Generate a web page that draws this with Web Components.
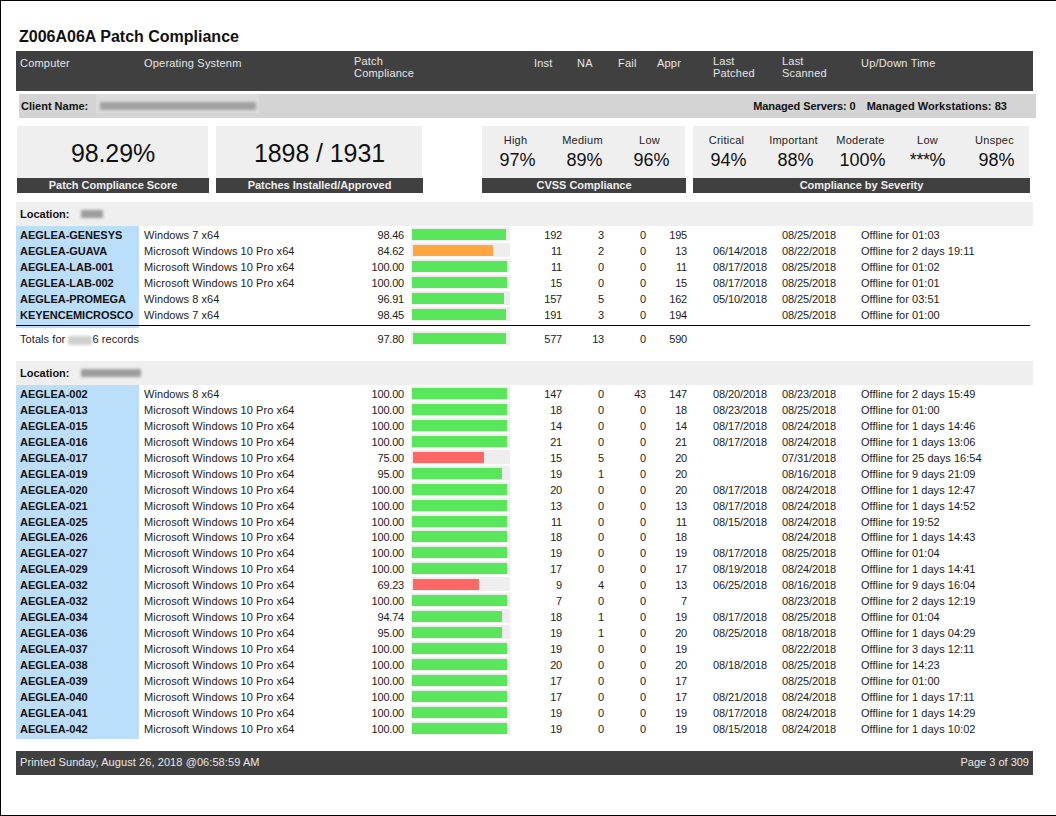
<!DOCTYPE html>
<html>
<head>
<meta charset="utf-8">
<title>Patch Compliance</title>
<style>
  html, body { margin: 0; background: #fff; }
  body { font: 11px "Liberation Sans", Arial, sans-serif; color: #1c1c1c; }
</style>
</head>
<body>
<report-page>
  <report-header></report-header>
  <client-bar servers="0" workstations="83"></client-bar>
  <stat-strip>
    <stat-card title="Patch Compliance Score" width="192" big="98.29%"></stat-card>
    <stat-card title="Patches Installed/Approved" width="207" big="1898 / 1931" style="margin-left:7px"></stat-card>
    <stat-card title="CVSS Compliance" width="204" cols="High:97%,Medium:89%,Low:96%" style="margin-left:59px"></stat-card>
    <stat-card title="Compliance by Severity" width="337" cols="Critical:94%,Important:88%,Moderate:100%,Low:***%,Unspec:98%" style="margin-left:7px"></stat-card>
  </stat-strip>
  <location-group id="lab" mark="22"></location-group>
  <location-group id="main" mark="60"></location-group>
  <report-footer printed="Printed Sunday, August 26, 2018 @06:58:59 AM" pageno="Page 3 of 309"></report-footer>
</report-page>

<script>
// small helper so every element below reads the same
const shadow = (el, html) => {
    el.attachShadow({ mode: 'open' }).innerHTML = html;
    return el.shadowRoot;
};

class ReportPage extends HTMLElement {
    constructor() {
        super();
        shadow(this, `
            <style>
                :host { display: block; box-sizing: border-box; width: 1056px; height: 816px; border: 1px solid #000; border-right: 0; padding-left: 15px; overflow: hidden; }
                h1 { margin: 0; height: 50px; box-sizing: border-box; padding: 27px 0 0 3px; font-size: 16px; line-height: 18px; font-weight: bold; color: #111; }
            </style>
            <h1>Z006A06A Patch Compliance</h1>
            <slot></slot>`);
    }
}

class ReportHeader extends HTMLElement {
    static columns = [
        ['Computer', 124], ['Operating Systenm', 210], ['Patch<br>Compliance', 180], ['Inst', 43], ['NA', 41],
        ['Fail', 39], ['Appr', 56], ['Last<br>Patched', 69], ['Last<br>Scanned', 79], ['Up/Down Time', 172],
    ];
    constructor() {
        super();
        const cells = ReportHeader.columns.map(([label, w]) =>
            `<div class="${label.includes('<br>') ? 'two' : 'one'}" style="width:${w}px">${label}</div>`).join('');
        shadow(this, `
            <style>
                :host { display: flex; box-sizing: border-box; width: 1017px; height: 40px; padding: 4px 0 0 4px; background: #404040; color: #e6e6e6; font-size: 11px; line-height: 12px; letter-spacing: .2px; }
                .one { padding-top: 2px; }
            </style>${cells}`);
    }
}

class RedactMark extends HTMLElement {
    constructor() {
        super();
        const w = this.getAttribute('w') || 20, h = this.getAttribute('h') || 6;
        shadow(this, `
            <style>
                :host { display: inline-block; vertical-align: middle; }
                div { width: ${w}px; height: ${h}px; background: var(--mark, #a8a8a8); filter: blur(1.6px); }
            </style><div></div>`);
    }
}

class ClientBar extends HTMLElement {
    constructor() {
        super();
        shadow(this, `
            <style>
                :host { display: flex; align-items: center; box-sizing: border-box; width: 1017px; height: 24px; margin: 3px 0 0 3px; padding: 0 29px 0 2px; background: #d4d4d4; font-weight: bold; color: #111; }
                .mask { display: flex; align-items: center; justify-content: center; box-sizing: border-box; width: 163px; height: 19px; margin: -5px 0 0 8px; padding-top: 5px; background: #dcdcdc; --mark: #a2a2a2; }
                .right { margin-left: auto; }
                .servers { letter-spacing: -.08px; }
                .stations { margin-left: 11px; letter-spacing: .05px; }
            </style>
            <span>Client Name:</span>
            <div class="mask"><redact-mark w="156" h="8"></redact-mark></div>
            <div class="right"><span class="servers">Managed Servers: ${this.getAttribute('servers')}</span><span class="stations">Managed Workstations: ${this.getAttribute('workstations')}</span></div>`);
    }
}

class StatStrip extends HTMLElement {
    constructor() {
        super();
        shadow(this, `
            <style>:host { display: flex; margin: 8px 0 0 1px; }</style>
            <slot></slot>`);
    }
}

class StatCard extends HTMLElement {
    constructor() {
        super();
        const cols = this.getAttribute('cols');
        const body = cols
            ? `<div class="cols" style="grid-template-columns:repeat(${cols.split(',').length},67px)">${cols.split(',').map(c => {
                const [label, value] = c.split(':');
                return `<div class="label">${label}</div><div class="value${value.startsWith('*') ? ' stars' : ''}">${value}</div>`;
            }).join('')}</div>`
            : `<div class="big">${this.getAttribute('big')}</div>`;
        shadow(this, `
            <style>
                :host { display: block; width: ${this.getAttribute('width')}px; flex: none; }
                .body { height: 52px; margin-right: 1px; background: #efefef; box-sizing: border-box; }
                .big { display: flex; justify-content: center; align-items: center; height: 52px; padding: 2px 0 0 1px; box-sizing: border-box; font-size: 25px; letter-spacing: -.1px; color: #111; }
                .cols { display: grid; grid-auto-flow: column; grid-template-rows: 13px 20px; row-gap: 3px; padding-top: 8px; text-align: center; }
                .label { font-size: 11px; line-height: 13px; letter-spacing: .25px; color: #222; }
                .value { font-size: 18px; line-height: 20px; color: #111; padding-left: 4px; }
                .value.stars { padding-left: 0; letter-spacing: -.4px; }
                .title { height: 15px; background: #404040; color: #eee; font-weight: bold; font-size: 11px; line-height: 15px; text-align: center; letter-spacing: -.02px; }
            </style>
            <div class="body">${body}</div>
            <div class="title">${this.getAttribute('title')}</div>`);
    }
}

class ComplianceBar extends HTMLElement {
    constructor() {
        super();
        const pct = parseFloat(this.getAttribute('pct'));
        const color = pct >= 90 ? '#5ae65a' : pct >= 80 ? '#ffa640' : '#ff6666';
        const inset = pct >= 90 && !this.hasAttribute('inset') ? 1 : 2;
        shadow(this, `
            <style>
                :host { display: block; width: 99px; height: 14px; box-sizing: border-box; padding: 2px 0 0 ${inset}px; background: #eee; }
                div { width: ${Math.round(pct * .95)}px; height: 11px; background: ${color}; }
            </style><div></div>`);
    }
}

// same column template for device rows and the totals row
const ROW_CSS = `
    :host { display: grid; grid-template-columns: 123px 230px 35px 112px 46px 42px 42px 41px 95px 79px 1fr; height: var(--row-h, 16px); line-height: 16px; font-size: 11px; color: #1c1c1c; }
    .name { padding-left: 4px; font-weight: bold; color: #111; white-space: nowrap; letter-spacing: -.03px; }
    .os { padding-left: 5px; white-space: nowrap; letter-spacing: .07px; }
    .num { text-align: right; white-space: nowrap; letter-spacing: -.2px; }
    .bar { padding-left: 7px; }
    .date { white-space: nowrap; letter-spacing: -.1px; }
    .date.first { padding-left: 26px; }
    .time { white-space: nowrap; letter-spacing: .04px; }
    .span { grid-column: 1 / span 2; padding-left: 4px; white-space: nowrap; letter-spacing: .07px; --mark: #d0d0d0; }
`;

class DeviceRow extends HTMLElement {
    constructor() {
        super();
        const a = n => this.getAttribute(n) || '';
        shadow(this, `
            <style>${ROW_CSS}</style>
            <div class="name">${a('name')}</div><div class="os">${a('os')}</div>
            <div class="num">${a('pct')}</div>
            <div class="bar"><compliance-bar pct="${a('pct')}"></compliance-bar></div>
            <div class="num">${a('inst')}</div><div class="num">${a('na')}</div><div class="num">${a('fail')}</div><div class="num">${a('appr')}</div>
            <div class="date first">${a('patched')}</div><div class="date">${a('scanned')}</div>
            <div class="time">${a('time')}</div>`);
    }
}

class TotalsRow extends HTMLElement {
    constructor() {
        super();
        const a = n => this.getAttribute(n) || '';
        shadow(this, `
            <style>${ROW_CSS} :host { margin-top: 3px; }</style>
            <div class="span">Totals for <redact-mark w="24" h="9"></redact-mark>6 records</div>
            <div class="num">${a('pct')}</div>
            <div class="bar"><compliance-bar pct="${a('pct')}" inset></compliance-bar></div>
            <div class="num">${a('inst')}</div><div class="num">${a('na')}</div><div class="num">${a('fail')}</div><div class="num">${a('appr')}</div>`);
    }
}

class LocationGroup extends HTMLElement {
    constructor() {
        super();
        shadow(this, `
            <style>
                :host { display: block; width: 1017px; margin-top: 9px; }
                :host(#main) { margin-top: 14px; --row-h: 15.95px; }
                .band { display: flex; align-items: center; height: 24px; padding-left: 4px; background: #efefef; font-weight: bold; color: #111; --mark: #9c9c9c; }
                .band redact-mark { margin-left: 11px; }
                .rows { padding: 1px 0; background: linear-gradient(#bbdefb, #bbdefb) 0 0 / 123px 100% no-repeat; }
                :host(#main) .rows { padding-bottom: 2px; }
                .rows.ruled { padding-bottom: 2px; }
                hr { width: 1014px; height: 1px; margin: 2px 0 0; border: 0; background: #000; }
            </style>
            <div class="band">Location:<redact-mark w="${this.getAttribute('mark')}" h="8"></redact-mark></div>
            <div class="rows"><slot></slot></div>
            <slot name="totals"></slot>`);
    }
    addRule () {
        const rows = this.shadowRoot.querySelector('.rows');
        rows.classList.add('ruled');
        rows.insertAdjacentHTML('beforeend', '<hr>');
    }
}

class ReportFooter extends HTMLElement {
    constructor() {
        super();
        shadow(this, `
            <style>
                :host { display: flex; justify-content: space-between; align-items: center; box-sizing: border-box; width: 1017px; height: 24px; margin-top: 12px; padding: 0 4px 1px; background: #404040; color: #e8e8e8; font-size: 11px; letter-spacing: .08px; }
                span + span { letter-spacing: 0; }
            </style>
            <span>${this.getAttribute('printed')}</span><span>${this.getAttribute('pageno')}</span>`);
    }
}

customElements.define('report-page', ReportPage);
customElements.define('report-header', ReportHeader);
customElements.define('redact-mark', RedactMark);
customElements.define('client-bar', ClientBar);
customElements.define('stat-strip', StatStrip);
customElements.define('stat-card', StatCard);
customElements.define('compliance-bar', ComplianceBar);
customElements.define('device-row', DeviceRow);
customElements.define('totals-row', TotalsRow);
customElements.define('location-group', LocationGroup);
customElements.define('report-footer', ReportFooter);

const W7 = 'Windows 7 x64', W8 = 'Windows 8 x64', M10 = 'Microsoft Windows 10 Pro x64';
const labRows = [
    ['AEGLEA-GENESYS', W7, '98.46', 192, 3, 0, 195, '', '08/25/2018', '01:03'],
    ['AEGLEA-GUAVA', M10, '84.62', 11, 2, 0, 13, '06/14/2018', '08/22/2018', '2 days 19:11'],
    ['AEGLEA-LAB-001', M10, '100.00', 11, 0, 0, 11, '08/17/2018', '08/25/2018', '01:02'],
    ['AEGLEA-LAB-002', M10, '100.00', 15, 0, 0, 15, '08/17/2018', '08/25/2018', '01:01'],
    ['AEGLEA-PROMEGA', W8, '96.91', 157, 5, 0, 162, '05/10/2018', '08/25/2018', '03:51'],
    ['KEYENCEMICROSCO', W7, '98.45', 191, 3, 0, 194, '', '08/25/2018', '01:00'],
];
const mainRows = [
    ['AEGLEA-002', W8, '100.00', 147, 0, 43, 147, '08/20/2018', '08/23/2018', '2 days 15:49'],
    ['AEGLEA-013', M10, '100.00', 18, 0, 0, 18, '08/23/2018', '08/25/2018', '01:00'],
    ['AEGLEA-015', M10, '100.00', 14, 0, 0, 14, '08/17/2018', '08/24/2018', '1 days 14:46'],
    ['AEGLEA-016', M10, '100.00', 21, 0, 0, 21, '08/17/2018', '08/24/2018', '1 days 13:06'],
    ['AEGLEA-017', M10, '75.00', 15, 5, 0, 20, '', '07/31/2018', '25 days 16:54'],
    ['AEGLEA-019', M10, '95.00', 19, 1, 0, 20, '', '08/16/2018', '9 days 21:09'],
    ['AEGLEA-020', M10, '100.00', 20, 0, 0, 20, '08/17/2018', '08/24/2018', '1 days 12:47'],
    ['AEGLEA-021', M10, '100.00', 13, 0, 0, 13, '08/17/2018', '08/24/2018', '1 days 14:52'],
    ['AEGLEA-025', M10, '100.00', 11, 0, 0, 11, '08/15/2018', '08/24/2018', '19:52'],
    ['AEGLEA-026', M10, '100.00', 18, 0, 0, 18, '', '08/24/2018', '1 days 14:43'],
    ['AEGLEA-027', M10, '100.00', 19, 0, 0, 19, '08/17/2018', '08/25/2018', '01:04'],
    ['AEGLEA-029', M10, '100.00', 17, 0, 0, 17, '08/19/2018', '08/24/2018', '1 days 14:41'],
    ['AEGLEA-032', M10, '69.23', 9, 4, 0, 13, '06/25/2018', '08/16/2018', '9 days 16:04'],
    ['AEGLEA-032', M10, '100.00', 7, 0, 0, 7, '', '08/23/2018', '2 days 12:19'],
    ['AEGLEA-034', M10, '94.74', 18, 1, 0, 19, '08/17/2018', '08/25/2018', '01:04'],
    ['AEGLEA-036', M10, '95.00', 19, 1, 0, 20, '08/25/2018', '08/18/2018', '1 days 04:29'],
    ['AEGLEA-037', M10, '100.00', 19, 0, 0, 19, '', '08/22/2018', '3 days 12:11'],
    ['AEGLEA-038', M10, '100.00', 20, 0, 0, 20, '08/18/2018', '08/25/2018', '14:23'],
    ['AEGLEA-039', M10, '100.00', 17, 0, 0, 17, '', '08/25/2018', '01:00'],
    ['AEGLEA-040', M10, '100.00', 17, 0, 0, 17, '08/21/2018', '08/24/2018', '1 days 17:11'],
    ['AEGLEA-041', M10, '100.00', 19, 0, 0, 19, '08/17/2018', '08/24/2018', '1 days 14:29'],
    ['AEGLEA-042', M10, '100.00', 19, 0, 0, 19, '08/15/2018', '08/24/2018', '1 days 10:02'],
];

const fillGroup = (group, rows) => {
    for (const [name, os, pct, inst, na, fail, appr, patched, scanned, time] of rows)
        group.insertAdjacentHTML('beforeend', `<device-row name="${name}" os="${os}" pct="${pct}" inst="${inst}" na="${na}" fail="${fail}" appr="${appr}" patched="${patched}" scanned="${scanned}" time="Offline for ${time}"></device-row>`);
};

const lab = document.getElementById('lab');
fillGroup(lab, labRows);
lab.addRule();
lab.insertAdjacentHTML('beforeend', '<totals-row slot="totals" pct="97.80" inst="577" na="13" fail="0" appr="590"></totals-row>');
fillGroup(document.getElementById('main'), mainRows);
</script>
</body>
</html>
